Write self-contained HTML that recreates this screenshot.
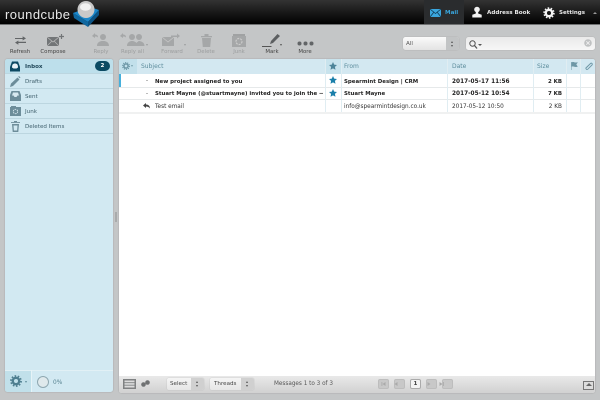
<!DOCTYPE html>
<html><head><meta charset="utf-8">
<style>
html,body{margin:0;padding:0;width:600px;height:400px;overflow:hidden;background:#c4c6c7;font-family:"DejaVu Sans","Liberation Sans",sans-serif;font-size:6.4px;color:#333}
div,span,svg{position:absolute;display:block;white-space:nowrap}
svg{overflow:visible}
.tb{font-size:5.4px;text-align:center;color:#444;top:48.5px;width:40px}
.tb.d{color:#9b9d9e}
.sf{left:25px;font-size:5.6px;color:#3f5f6c}
.sr{left:5px;width:108px;height:1px;background:#bcd6e0}
.th{top:63px;font-size:6px;color:#5b8b9b}
.c{font-size:5.75px;color:#333}
.b{font-weight:bold;color:#222;font-size:5.45px}
.dt{font-size:5.8px}
.vl{top:59px;width:1px;height:53px;background:#e0edf2}
.hl{left:119px;width:476px;height:1px;background:#e6e9ea}
.pg{top:379px;width:11px;height:10px;border-radius:2px;background:#c8c8c8;border:1px solid #bdbdbd;box-sizing:border-box}
.nav{font-size:5.6px;font-weight:bold;color:#e8e8e8;top:10px}
.ar{width:0;height:0;border:1.500px solid transparent}
</style></head>
<body>
<div style="left:0;top:0;width:600px;height:24px;background:linear-gradient(#333,#000)"></div>
<div style="left:0;top:24px;width:600px;height:1px;background:#6f7172"></div>
<div style="left:5px;top:6px;font-family:'Liberation Sans',sans-serif;font-size:13px;letter-spacing:.45px;color:#e8e8e8;line-height:18px">roundcube</div>
<svg style="left:72px;top:2px" width="28" height="25" viewBox="0 0 28 25">
<polygon points="1,11 18,5 27,8 16,20" fill="#1a86c9"/>
<polygon points="1,11 16,20 16,25 2,16" fill="#10679f"/>
<polygon points="16,20 27,8 27,13 16,25" fill="#0b5384"/>
<circle cx="14" cy="7.500" r="8.500" fill="#c9c9c9"/><ellipse cx="13.500" cy="5" rx="5.500" ry="3.800" fill="#f1f1f1"/>
</svg>
<div style="left:424px;top:0;width:40px;height:24px;background:#2a2c2e"></div>
<svg style="left:430px;top:9px" width="11" height="8" viewBox="0 0 11 8"><rect width="11" height="8" fill="#3aa6de"/><path d="M0 0l5.500 4.500L11 0M0 8l4-5M11 8L7 3" stroke="#123a55" stroke-width=".8" fill="none"/></svg>
<div class="nav" style="left:445px;color:#39a5dc">Mail</div>
<svg style="left:471px;top:6px" width="12" height="12" viewBox="0 0 12 12"><circle cx="6" cy="3.500" r="2.800" fill="#f3f3f3"/><path d="M4.800 6h2.400v1.500l3.500 1.300v2.700H1.300V8.800l3.500-1.300z" fill="#f3f3f3"/></svg>
<div class="nav" style="left:487px">Address Book</div>
<svg style="left:543px;top:6.500px" width="12" height="12" viewBox="0 0 13 13"><circle cx="6.500" cy="6.500" r="3.500" fill="none" stroke="#f3f3f3" stroke-width="2.600"/><circle cx="6.500" cy="6.500" r="5.300" fill="none" stroke="#f3f3f3" stroke-width="1.800" stroke-dasharray="1.700 1.630"/></svg>
<div class="nav" style="left:559px;font-size:5.5px">Settings</div>
<div style="left:593px;top:12px;width:0;height:0;border:2px solid transparent;border-bottom:2px solid #999;border-top:0"></div>

<!-- toolbar icons -->
<svg style="left:15px;top:35px" width="11" height="11" viewBox="0 0 13 12"><path d="M0 3h9V1l4 2.500L9 6V4.200H0zM13 7.500H4V6L0 8.500 4 11V9h9z" fill="#626567"/></svg>
<div class="tb" style="left:0;">Refresh</div>
<svg style="left:47px;top:32px" width="18" height="14" viewBox="0 0 18 14"><rect x="0" y="5" width="12" height="9" fill="#727577"/><path d="M0 5l6 5 6-5M0 14l5-5M12 14L7 9" stroke="#bbb" stroke-width=".7" fill="none"/><path d="M14.500 2v5M12 4.500h5" stroke="#727577" stroke-width="1.200"/></svg>
<div class="tb" style="left:33px">Compose</div>
<svg style="left:92px;top:33px" width="17" height="14" viewBox="0 0 17 14"><circle cx="11" cy="4" r="3" fill="#a5a7a8"/><path d="M5 13c0-4 3-4.500 4.500-5h3c1.500.5 4.500 1 4.500 5z" fill="#a5a7a8"/><path d="M0 3l3-3v1.500c2 0 3 1 3 3-1-1-2-1-3-1V5z" fill="#a5a7a8"/></svg>
<div class="tb d" style="left:81px">Reply</div>
<svg style="left:120px;top:33px" width="25" height="14" viewBox="0 0 25 14"><circle cx="12" cy="4" r="3" fill="#a5a7a8"/><circle cx="19" cy="4" r="3" fill="#a5a7a8"/><path d="M7 13c0-4 3-4.500 4-5h2c1.500.5 3 1 3.500 2 .5-1 2-1.500 2-2h1c1.500.5 5 1 5 5z" fill="#a5a7a8"/><path d="M0 3l3-3v1.500c2 0 3 1 3 3-1-1-2-1-3-1V5z" fill="#a5a7a8"/></svg>
<div class="tb d" style="left:120px;width:25px">Reply all</div>
<div class="ar" style="left:146px;top:44px;border-top:2px solid #9b9d9e"></div>
<svg style="left:162px;top:33px" width="18" height="13" viewBox="0 0 18 13"><rect y="4" width="12" height="9" fill="#a5a7a8"/><path d="M0 4l6 5 6-5" stroke="#c8c8c8" stroke-width=".7" fill="none"/><path d="M9 2.500h6V0.500l3 2.500-3 2.500V4H9z" fill="#a5a7a8"/></svg>
<div class="tb d" style="left:152px">Forward</div>
<div class="ar" style="left:184px;top:44px;border-top:2px solid #9b9d9e"></div>
<svg style="left:201px;top:34px" width="11" height="13" viewBox="0 0 11 13"><path d="M0 2h11v1.300H0zM3.500 0h4v2h-4zM1 4h9l-.8 9H1.800z" fill="#a5a7a8"/></svg>
<div class="tb d" style="left:186px">Delete</div>
<svg style="left:232px;top:34px" width="14" height="13" viewBox="0 0 14 13"><path d="M1 0h12v2H1z" fill="#a0a2a3"/><rect y="2" width="14" height="11" fill="#a5a7a8"/><circle cx="7" cy="7.500" r="3" fill="none" stroke="#cbcbcb" stroke-width="1.200" stroke-dasharray="2 1"/></svg>
<div class="tb d" style="left:219px">Junk</div>
<svg style="left:262px;top:33px" width="19" height="14" viewBox="0 0 19 14"><path d="M0 13.500h9.500" stroke="#555" stroke-width="1"/><path d="M8 11l1-3L15.500 1l2.500 2-7 7z" fill="#5c5f61"/></svg>
<div class="ar" style="left:280px;top:44px;border-top:2px solid #555"></div>
<div class="tb" style="left:252px">Mark</div>
<svg style="left:297px;top:41px" width="17" height="5" viewBox="0 0 17 5"><circle cx="2.500" cy="2.500" r="2" fill="#626567"/><circle cx="8.500" cy="2.500" r="2" fill="#626567"/><circle cx="14.500" cy="2.500" r="2" fill="#626567"/></svg>
<div class="tb" style="left:285px">More</div>

<!-- filter -->
<div style="left:403px;top:37px;width:56px;height:13px;border-radius:2.500px;background:linear-gradient(#fafafa,#e3e3e3);box-shadow:0 0 1px #999"></div>
<div style="left:446px;top:37px;width:13px;height:13px;border-radius:0 2.500px 2.500px 0;background:#c2c4c5"></div>
<div style="left:406px;top:41px;font-size:5.6px;color:#555">All</div>
<div class="ar" style="left:451px;top:40.500px;border-bottom:2px solid #555;border-top:0"></div>
<div class="ar" style="left:451px;top:44.500px;border-top:2px solid #555;border-bottom:0"></div>
<div style="left:466px;top:37px;width:129px;height:13px;border-radius:2.500px;background:linear-gradient(#e9e9e9,#f6f6f6);box-shadow:0 0 1px #999"></div>
<svg style="left:469px;top:39.500px" width="13" height="9" viewBox="0 0 13 9"><circle cx="3.500" cy="3.500" r="2.700" fill="none" stroke="#555" stroke-width="1"/><path d="M5.500 5.500L8 8.500" stroke="#555" stroke-width="1.300"/><path d="M9 4h4l-2 2z" fill="#555"/></svg>
<svg style="left:584px;top:39px" width="8" height="8" viewBox="0 0 8 8"><circle cx="4" cy="4" r="3.800" fill="#bfc1c2"/><path d="M2.300 2.300l3.400 3.400M5.700 2.300L2.300 5.700" stroke="#eee" stroke-width="1"/></svg>

<!-- sidebar -->
<div style="left:5px;top:59px;width:108px;height:333px;background:#d2e9f2;border-radius:2.500px;box-shadow:0 0 1.500px #999"></div>
<div style="left:5px;top:59px;width:108px;height:14px;background:#bddfeb;border-radius:2.500px 2.500px 0 0"></div>
<div class="sr" style="top:73px"></div><div class="sr" style="top:88px"></div><div class="sr" style="top:103px"></div><div class="sr" style="top:118px"></div><div class="sr" style="top:133px"></div>
<svg style="left:10px;top:60.500px" width="10" height="11" viewBox="0 0 10 11"><path d="M2 .5h6l2 5.500v4.500H0V6z" fill="#0d4a63"/><path d="M2 6.500c0-3 1-4 3-4s3 1 3 4L6.500 7.500h-3z" fill="#e9f3f7"/></svg>
<div class="sf b" style="top:64px;color:#1f4657;font-size:5.6px">Inbox</div>
<div style="left:95px;top:61px;width:15px;height:10px;border-radius:5px;background:#0b4a63;color:#fff;font-size:5.6px;font-weight:bold;text-align:center;line-height:10px">2</div>
<svg style="left:10px;top:76px" width="11" height="11" viewBox="0 0 11 11"><path d="M0 11l1-3.500L7.500 1.500l2 2L3 10z" fill="#6d8d9a"/><path d="M9 0l1.500 1.500-.8.8-1.500-1.500z" fill="#6d8d9a"/></svg>
<div class="sf" style="top:79px">Drafts</div>
<svg style="left:10px;top:91px" width="11" height="10" viewBox="0 0 11 10"><path d="M1.500 0h8l1.500 4v6H0V4z" fill="#6d8d9a"/><path d="M3 1.500h5l1 3H7.500l-1 1.500h-2L3.500 4.500H2z" fill="#d8e9f0"/></svg>
<div class="sf" style="top:94px">Sent</div>
<svg style="left:10px;top:106px" width="11" height="10" viewBox="0 0 11 10"><rect y="1" width="11" height="9" fill="#6d8d9a"/><rect x="1" width="5" height="2" fill="#6d8d9a"/><circle cx="5.500" cy="5.500" r="2.200" fill="none" stroke="#d8e9f0" stroke-width=".9" stroke-dasharray="1.500 .8"/></svg>
<div class="sf" style="top:109px">Junk</div>
<svg style="left:11px;top:120.500px" width="9" height="11" viewBox="0 0 9 11"><path d="M0 1h9v.9H0zM3 0h3v1H3z" fill="#6d8d9a"/><path d="M1 3h7l-.7 8H1.700z" fill="#6d8d9a"/><path d="M2.500 4.500h4l-.4 5H2.900z" fill="#d2e9f2"/></svg>
<div class="sf" style="top:124px">Deleted Items</div>
<div style="left:5px;top:370px;width:108px;height:1px;background:#e1f0f5"></div>
<div style="left:5px;top:371px;width:26px;height:21px;background:#c1e0ea;border-radius:0 0 0 2.500px"></div>
<div style="left:31px;top:370px;width:1px;height:22px;background:#e6f3f7"></div>
<svg style="left:10px;top:375px" width="12" height="12" viewBox="0 0 12 12"><circle cx="6" cy="6" r="3.200" fill="none" stroke="#4f7f90" stroke-width="2.400"/><circle cx="6" cy="6" r="5" fill="none" stroke="#4f7f90" stroke-width="1.800" stroke-dasharray="1.600 1.540"/></svg>
<div class="ar" style="left:24.500px;top:381px;border-top:2px solid #5f8a99"></div>
<svg style="left:37px;top:376px" width="12" height="12" viewBox="0 0 12 12"><circle cx="6" cy="6" r="5.500" fill="#dfe9ec" stroke="#8fa8b1" stroke-width="1"/></svg>
<div style="left:53px;top:380px;font-size:5.8px;color:#55808f">0%</div>

<!-- splitter -->
<div style="left:115px;top:212px;width:2px;height:10px;background:#a9abac"></div>

<!-- main -->
<div style="left:119px;top:59px;width:476px;height:334px;background:#fff;border-radius:2.500px;box-shadow:0 0 1.500px #999"></div>
<div style="left:119px;top:59px;width:476px;height:15px;background:#d3e8f1;border-radius:2.500px 2.500px 0 0"></div>
<div style="left:119px;top:59px;width:18px;height:15px;background:#c2e0eb;border-radius:2.500px 0 0 0"></div>
<div style="left:326px;top:59px;width:15px;height:15px;background:#c8e3ed"></div>
<div style="left:119px;top:74px;width:1.500px;height:13px;background:#46b0dc"></div>
<div class="hl" style="top:87px"></div><div class="hl" style="top:99px"></div><div class="hl" style="top:112px;height:2px;background:#f0f1f1"></div>
<div class="vl" style="left:325px"></div><div class="vl" style="left:341px"></div><div class="vl" style="left:447px"></div><div class="vl" style="left:533px"></div><div class="vl" style="left:566px"></div><div class="vl" style="left:580px"></div>

<svg style="left:122px;top:62px" width="8" height="8" viewBox="0 0 8 8"><circle cx="4" cy="4" r="2.100" fill="none" stroke="#6d97a6" stroke-width="1.500"/><circle cx="4" cy="4" r="3.400" fill="none" stroke="#6d97a6" stroke-width="1.100" stroke-dasharray="1.100 1.050"/></svg>
<div class="ar" style="left:131px;top:65px;border-top:2px solid #7ba1ae"></div>
<div class="th" style="left:141px">Subject</div>
<div class="th" style="left:344px">From</div>
<div class="th" style="left:452px">Date</div>
<div class="th" style="left:537px">Size</div>
<svg style="left:329px;top:62px" width="8" height="8" viewBox="0 0 10 10"><path d="M5 0l1.500 3.300 3.500.4-2.600 2.400.7 3.600L5 8 1.900 9.700l.7-3.600L0 3.700l3.500-.4z" fill="#4d8499"/></svg>
<svg style="left:571px;top:62px" width="7" height="8" viewBox="0 0 7 8"><path d="M.5 0v8M.5 .5c2-1 3 .8 6 0L5 2.500l1.500 2c-3 .8-4-1-6 0z" stroke="#6d97a6" stroke-width=".5" fill="#6d97a6"/></svg>
<svg style="left:585px;top:62px" width="8" height="8" viewBox="0 0 8 8"><path d="M1.500 5.500l4-4c1-1 2.500.5 1.500 1.500L2.800 7.200c-1 .8-2.500-.5-1.700-1.500L5 2" fill="none" stroke="#6d97a6" stroke-width=".9"/></svg>

<div style="left:146px;top:80px;width:2px;height:1px;background:#bbb"></div>
<div style="left:146px;top:93px;width:2px;height:1px;background:#bbb"></div>
<svg style="left:143px;top:103px" width="7" height="6" viewBox="0 0 7 6"><path d="M0 2.500L3 0v1.500c2.500 0 4 1.500 4 4C6 4 4.500 3.500 3 3.500V5z" fill="#444"/></svg>

<div class="c b" style="left:155px;top:79px">New project assigned to you</div>
<div class="c b" style="left:155px;top:91px;width:168px;overflow:hidden">Stuart Mayne (@stuartmayne) invited you to join the —</div>
<div class="c" style="left:155px;top:104px">Test email</div>
<svg style="left:329px;top:76px" width="8" height="8" viewBox="0 0 10 10"><path d="M5 0l1.500 3.300 3.500.4-2.600 2.400.7 3.600L5 8 1.900 9.700l.7-3.600L0 3.700l3.500-.4z" fill="#1b7faa"/></svg>
<svg style="left:329px;top:88.500px" width="8" height="8" viewBox="0 0 10 10"><path d="M5 0l1.500 3.300 3.500.4-2.600 2.400.7 3.600L5 8 1.900 9.700l.7-3.600L0 3.700l3.500-.4z" fill="#1b7faa"/></svg>
<div class="c b" style="left:344px;top:79px">Spearmint Design | CRM</div>
<div class="c b" style="left:344px;top:91px">Stuart Mayne</div>
<div class="c" style="left:344px;top:104px">info@spearmintdesign.co.uk</div>
<div class="c b dt" style="left:452px;top:79px">2017-05-17 11:56</div>
<div class="c b dt" style="left:452px;top:91px">2017-05-12 10:54</div>
<div class="c" style="left:452px;top:104px">2017-05-12 10:50</div>
<div class="c b" style="left:533px;top:79px;width:29px;text-align:right">2 KB</div>
<div class="c b" style="left:533px;top:91px;width:29px;text-align:right">7 KB</div>
<div class="c" style="left:533px;top:104px;width:29px;text-align:right">2 KB</div>

<!-- footer -->
<div style="left:119px;top:376px;width:476px;height:17px;background:linear-gradient(#e9e9e9,#d1d1d1);border-radius:0 0 2.500px 2.500px"></div>
<svg style="left:123px;top:379px" width="13" height="10" viewBox="0 0 13 10"><rect width="13" height="10" fill="#7f8182"/><rect x="1.500" y="1.500" width="10" height="7" fill="#dcdcdc"/><path d="M1.500 3.700h10M1.500 6.200h10" stroke="#7f8182" stroke-width=".8"/></svg>
<svg style="left:141px;top:380px" width="9" height="7" viewBox="0 0 9 7"><circle cx="2.500" cy="4.500" r="2.300" fill="#6f7172"/><circle cx="6.500" cy="2.500" r="2.300" fill="#6f7172"/></svg>
<div style="left:167px;top:378px;width:37px;height:12px;border-radius:2px;background:linear-gradient(#f5f5f5,#e6e6e6);box-shadow:0 0 1px #aaa"></div>
<div style="left:191px;top:378px;width:13px;height:12px;background:#d0d0d0;border-radius:0 2px 2px 0"></div>
<div style="left:170px;top:381px;font-size:5.6px;color:#444">Select</div>
<div class="ar" style="left:196px;top:381px;border-bottom:2px solid #555;border-top:0"></div>
<div class="ar" style="left:196px;top:385px;border-top:2px solid #555;border-bottom:0"></div>
<div style="left:210px;top:378px;width:44px;height:12px;border-radius:2px;background:linear-gradient(#f5f5f5,#e6e6e6);box-shadow:0 0 1px #aaa"></div>
<div style="left:241px;top:378px;width:13px;height:12px;background:#d0d0d0;border-radius:0 2px 2px 0"></div>
<div style="left:214px;top:381px;font-size:5.6px;color:#444">Threads</div>
<div class="ar" style="left:246px;top:381px;border-bottom:2px solid #555;border-top:0"></div>
<div class="ar" style="left:246px;top:385px;border-top:2px solid #555;border-bottom:0"></div>
<div style="left:274px;top:381px;font-size:5.7px;color:#555">Messages 1 to 3 of 3</div>
<div class="pg" style="left:378px"></div><div class="pg" style="left:394px"></div>
<div class="pg" style="left:410px;background:#f3f3f3;border-color:#aaa;font-size:5.6px;line-height:8px;text-align:center;color:#444;font-weight:bold">1</div>
<div class="pg" style="left:426px"></div><div class="pg" style="left:442px"></div>
<svg style="left:378px;top:379px" width="75" height="10" viewBox="0 0 75 10" fill="#aaa"><path d="M3.500 3h.8v4h-.8zM7.500 3v4l-3-2zM19.500 3v4l-3-2zM49.500 3v4l3-2zM61.500 3v4l3-2zM65 3h.8v4H65z"/></svg>
<div style="left:583px;top:381px;width:9px;height:7px;background:#ddd;border:1px solid #777"></div>
<div class="ar" style="left:585.500px;top:382.500px;border:3px solid transparent;border-bottom:3px solid #666;border-top:0"></div>
</body></html>
